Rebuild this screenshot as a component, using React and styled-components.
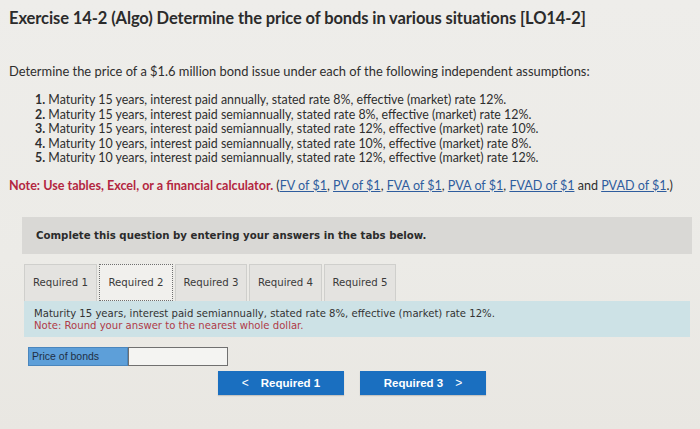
import React from "react";
import styled, { createGlobalStyle } from "styled-components";

const Global = createGlobalStyle`
  html, body { margin: 0; padding: 0; background: #edece8; }
  body { width: 700px; height: 429px; overflow: hidden; font-family: Lato, "Open Sans", sans-serif; color: #2a2a2a; }
`;

const Page = styled.div`
  width: 700px;
  height: 429px;
  background: linear-gradient(180deg, #eeedea 0%, #ecebe7 60%, #e9e7e2 100%);
  box-sizing: border-box;
  padding: 9px 0 0 9px;
`;

const Title = styled.h1`
  margin: 0;
  font-family: Lato, sans-serif;
  font-weight: 700;
  font-size: 16.5px;
  line-height: 18px;
  color: #2b2b2b;
  letter-spacing: -0.1px;
`;

const Intro = styled.p`
  margin: 36px 0 0 0;
  font-size: 12.9px;
  line-height: 16px;
  color: #2e2e2e;
`;

const List = styled.ol`
  margin: 14px 0 0 0;
  padding: 0 0 0 26px;
  list-style: none;
  font-size: 12.4px;
  line-height: 14.5px;
  color: #2e2e2e;
`;

const Num = styled.b`
  font-weight: 700;
`;

const Note = styled.p`
  margin: 12px 0 0 0;
  font-size: 12.55px;
  line-height: 16px;
  color: #2e2e2e;
  white-space: nowrap;
`;

const Red = styled.span`
  color: #b32640;
  font-weight: 700;
`;

const LinkA = styled.a`
  color: #2f5d9e;
  text-decoration: underline;
`;

const QuestionBox = styled.div`
  margin: 23px 0 0 13px;
  width: 670px;
  height: 37px;
  background: #d9d8d5;
  display: flex;
  align-items: center;
  padding-left: 14px;
  box-sizing: border-box;
  font-family: "DejaVu Sans", Verdana, sans-serif;
  font-weight: 700;
  font-size: 10.2px;
  color: #2b2b2b;
`;

const Tabs = styled.div`
  margin: 10px 0 0 15px;
  display: flex;
  gap: 2px;
  height: 37px;
  font-family: "DejaVu Sans", Verdana, sans-serif;
  font-size: 10.2px;
`;

const Tab = styled.div`
  width: ${p => p.$w}px;
  box-sizing: border-box;
  display: flex;
  align-items: center;
  justify-content: center;
  color: #3a3a3a;
  background: ${p => (p.$active ? "#f1f0ed" : "#e4e3e0")};
  border: ${p => (p.$active ? "1.5px dotted #6f6f6f" : "1px solid #cfcfcc")};
  border-bottom: ${p => (p.$active ? "1.5px dotted #6f6f6f" : "none")};
`;

const Panel = styled.div`
  margin: 0 0 0 15px;
  width: 666px;
  height: 36px;
  background: #cde2e6;
  box-sizing: border-box;
  padding: 7px 0 0 10px;
  font-family: "DejaVu Sans", Verdana, sans-serif;
  font-size: 10.1px;
  line-height: 12.5px;
  color: #333;
`;

const PanelNote = styled.div`
  color: #b03a48;
`;

const AnswerRow = styled.div`
  margin: 10px 0 0 19px;
  display: flex;
  height: 19px;
`;

const Label = styled.div`
  width: 100px;
  background: #5d9fd9;
  border: 1px solid #4a86bd;
  box-sizing: border-box;
  font-family: "Liberation Sans", Arial, sans-serif;
  font-size: 10.5px;
  color: #1f2f45;
  display: flex;
  align-items: center;
  padding-left: 3px;
`;

const Input = styled.div`
  width: 100px;
  background: #f4f4f2;
  border: 1px solid #707070;
  box-sizing: border-box;
`;

const Buttons = styled.div`
  margin: 5px 0 0 209px;
  display: flex;
  gap: 16px;
`;

const NavButton = styled.div`
  width: 126px;
  height: 24px;
  background: #1a6fc0;
  color: #fff;
  display: flex;
  align-items: center;
  justify-content: center;
  gap: 12px;
  font-family: "Liberation Sans", Arial, sans-serif;
  font-weight: 700;
  font-size: 11.5px;
  box-shadow: 0 1px 1px rgba(0,0,0,0.15);
`;

const Chev = styled.span`
  font-weight: 400;
  font-size: 12px;
`;

const items = [
  "Maturity 15 years, interest paid annually, stated rate 8%, effective (market) rate 12%.",
  "Maturity 15 years, interest paid semiannually, stated rate 8%, effective (market) rate 12%.",
  "Maturity 15 years, interest paid semiannually, stated rate 12%, effective (market) rate 10%.",
  "Maturity 10 years, interest paid semiannually, stated rate 10%, effective (market) rate 8%.",
  "Maturity 10 years, interest paid semiannually, stated rate 12%, effective (market) rate 12%.",
];

const tabs = [
  { t: "Required 1", w: 73 },
  { t: "Required 2", w: 74, active: true },
  { t: "Required 3", w: 72 },
  { t: "Required 4", w: 73 },
  { t: "Required 5", w: 72 },
];

export default function App() {
  return (
    <>
      <Global />
      <Page>
        <Title>Exercise 14-2 (Algo) Determine the price of bonds in various situations [LO14-2]</Title>
        <Intro>Determine the price of a $1.6 million bond issue under each of the following independent assumptions:</Intro>
        <List>
          {items.map((s, i) => (
            <li key={i}><Num>{i + 1}.</Num> {s}</li>
          ))}
        </List>
        <Note>
          <Red>Note: Use tables, Excel, or a financial calculator.</Red>{" "}
          (<LinkA>FV of $1</LinkA>, <LinkA>PV of $1</LinkA>, <LinkA>FVA of $1</LinkA>, <LinkA>PVA of $1</LinkA>, <LinkA>FVAD of $1</LinkA> and <LinkA>PVAD of $1</LinkA>.)
        </Note>
        <QuestionBox>Complete this question by entering your answers in the tabs below.</QuestionBox>
        <Tabs>
          {tabs.map(t => (
            <Tab key={t.t} $w={t.w} $active={t.active}>{t.t}</Tab>
          ))}
        </Tabs>
        <Panel>
          <div>Maturity 15 years, interest paid semiannually, stated rate 8%, effective (market) rate 12%.</div>
          <PanelNote>Note: Round your answer to the nearest whole dollar.</PanelNote>
        </Panel>
        <AnswerRow>
          <Label>Price of bonds</Label>
          <Input />
        </AnswerRow>
        <Buttons>
          <NavButton><Chev>&lt;</Chev>Required 1</NavButton>
          <NavButton>Required 3<Chev>&gt;</Chev></NavButton>
        </Buttons>
      </Page>
    </>
  );
}
